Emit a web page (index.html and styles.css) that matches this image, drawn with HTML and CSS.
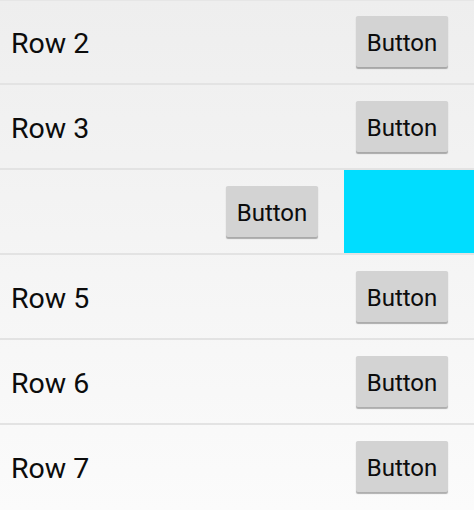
FILE: index.html
```html
<!DOCTYPE html>
<html>
<head>
<meta charset="utf-8">
<link rel="stylesheet" href="styles.css">
</head>
<body>
<div class="list">
  <div class="row"><span class="label">Row 2</span><button class="btn">Button</button></div>
  <div class="row"><span class="label">Row 3</span><button class="btn">Button</button></div>
  <div class="row swiped">
    <div class="content"><button class="btn">Button</button></div>
    <div class="action"></div>
  </div>
  <div class="row"><span class="label">Row 5</span><button class="btn">Button</button></div>
  <div class="row"><span class="label">Row 6</span><button class="btn">Button</button></div>
  <div class="row"><span class="label">Row 7</span><button class="btn">Button</button></div>
</div>
</body>
</html>
```
FILE: styles.css
```css
html, body {
  margin: 0;
  padding: 0;
}
body {
  width: 474px;
  height: 510px;
  overflow: hidden;
  font-family: Roboto, "Noto Sans", sans-serif;
  background: linear-gradient(#eeeeee, #fbfbfb);
  border-top: 1px solid #e6e6e6;
  box-sizing: border-box;
}
.list {
  display: flex;
  flex-direction: column;
  margin-top: -1px;
}
.row {
  height: 83px;
  border-bottom: 2px solid #e3e3e3;
  display: flex;
  align-items: center;
  justify-content: space-between;
  padding: 0 26px 0 11px;
  overflow: hidden;
}
.row:last-child {
  border-bottom-color: transparent;
}
.label {
  font-size: 28.5px;
  color: #0c0c0c;
  padding-top: 3px;
}
.btn {
  width: 92px;
  height: 51px;
  border: none;
  border-radius: 2px;
  background: #d3d3d3;
  box-shadow: 0 1.5px 1px rgba(0,0,0,0.3);
  font-family: Roboto, "Noto Sans", sans-serif;
  font-size: 24px;
  color: #0c0c0c;
  padding: 2px 0 0 0;
}
.swiped {
  padding: 0;
  justify-content: flex-start;
  align-items: stretch;
}
.content {
  flex: 0 0 100%;
  box-sizing: border-box;
  margin-left: -130px;
  display: flex;
  align-items: center;
  justify-content: flex-end;
  padding: 0 26px 0 12px;
}
.action {
  flex: 0 0 130px;
  background: #00ddff;
  margin-bottom: -2px;
}
```
